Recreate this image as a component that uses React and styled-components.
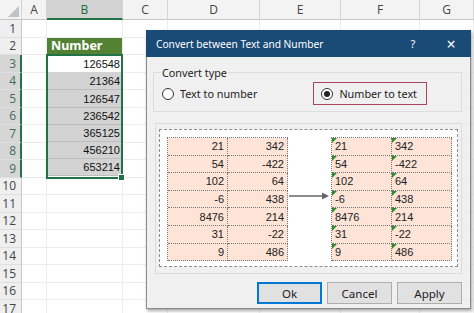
import styled, { createGlobalStyle, css } from "styled-components";

const Global = createGlobalStyle`
  html, body { margin: 0; padding: 0; background: #fff; overflow: hidden; }
  body { width: 474px; height: 313px; }
`;

const Page = styled.div`
  position: relative;
  width: 474px;
  height: 313px;
  overflow: hidden;
  font-family: "Liberation Sans", Arial, sans-serif;
`;

const Sheet = styled.div`
  display: grid;
  grid-template-columns: 22px 25px 76px 45px 92px 81px 79px 54px;
  grid-template-rows: 20px repeat(17, 17.5px);
`;

const Corner = styled.div`
  position: relative;
  background: #f3f3f3;
  border-right: 1px solid #d4d4d4;
  border-bottom: 1px solid #c6c6c6;
  &::after {
    content: "";
    position: absolute;
    right: 2px;
    bottom: 2px;
    border-left: 11px solid transparent;
    border-bottom: 11px solid #c1c1c1;
  }
`;

const ColHead = styled.div`
  display: flex;
  align-items: center;
  justify-content: center;
  font-family: "Open Sans", "Noto Sans", sans-serif;
  font-size: 12px;
  color: #444;
  background: #f3f3f3;
  border-right: 1px solid #d4d4d4;
  border-bottom: 1px solid #c6c6c6;
  ${(p) =>
    p.$selected &&
    css`
      background: #d2d2d2;
      color: #1e6b3c;
      border-bottom: 2px solid #217346;
    `}
`;

const RowHead = styled.div`
  display: flex;
  align-items: center;
  justify-content: flex-end;
  padding-right: 5px;
  font-family: "Open Sans", "Noto Sans", sans-serif;
  font-size: 12px;
  color: #444;
  background: #efefef;
  border-right: 1px solid #c6c6c6;
  border-bottom: 1px solid #dedede;
  ${(p) =>
    p.$selected &&
    css`
      background: #d6d6d6;
      color: #4b6a55;
      border-right: 2px solid #217346;
      padding-right: 4px;
    `}
`;

const Cell = styled.div`
  display: flex;
  align-items: center;
  justify-content: flex-end;
  padding-right: 3px;
  font-size: 11px;
  color: #111;
  background: #fff;
  border-right: 1px solid #ececec;
  border-bottom: 1px solid #ececec;
  ${(p) =>
    p.$kind === "title" &&
    css`
      justify-content: flex-start;
      padding-left: 4px;
      background: #548235;
      color: #fff;
      font-weight: bold;
      font-size: 12.5px;
      font-family: "Noto Sans", "Liberation Sans", sans-serif;
    `}
`;

const Range = styled.div`
  grid-column: 3;
  grid-row: 4 / 11;
  position: relative;
  display: grid;
  grid-auto-rows: 1fr;
  margin: -1px 0 -1px -1px;
  border: 2px solid #217346;
`;

const RangeCell = styled.div`
  display: flex;
  align-items: center;
  justify-content: flex-end;
  padding-right: 1px;
  font-size: 11px;
  color: #111;
  background: ${(p) => (p.$active ? "#fff" : "#d3d3d3")};
  border-bottom: 1px solid ${(p) => (p.$active ? "#d3d3d3" : "#bdbdbd")};
  &:last-child {
    border-bottom: none;
  }
`;

const FillHandle = styled.span`
  position: absolute;
  right: -4px;
  bottom: -4px;
  width: 5px;
  height: 5px;
  background: #217346;
  border: 1px solid #fff;
`;

/* dialog */

const Dialog = styled.div`
  position: absolute;
  left: 146px;
  top: 30px;
  width: 325px;
  height: 279px;
  box-sizing: border-box;
  display: flex;
  flex-direction: column;
  background: #f0f0f0;
  border: 1px solid #8a8a8a;
  border-top: none;
  box-shadow: 1px 2px 3px rgba(0, 0, 0, 0.35);
  font-family: "Noto Sans", "Open Sans", sans-serif;
  font-size: 10.8px;
  color: #222;
`;

const TitleBar = styled.div`
  height: 27px;
  display: flex;
  align-items: center;
  margin: 0 -1px;
  padding: 0 12px 0 10px;
  background: #1a4a76;
  color: #fff;
  font-size: 10.2px;
`;

const Title = styled.span`
  flex: 1;
`;

const TitleButton = styled.span`
  width: 16px;
  text-align: center;
  font-size: ${(p) => (p.$big ? "16px" : "11px")};
  margin-left: ${(p) => (p.$big ? "22px" : "0")};
`;

const Body = styled.div`
  flex: 1;
  display: flex;
  flex-direction: column;
  padding: 8px 8px 0 6px;
`;

const Group = styled.fieldset`
  margin: 0;
  padding: 1px 34px 5px 7px;
  border: 1px solid #dcdcdc;
  display: flex;
  align-items: center;
`;

const Legend = styled.legend`
  padding: 0 1px;
  margin-left: 0;
`;

const Option = styled.label`
  display: flex;
  align-items: center;
  gap: 6px;
  padding: ${(p) => (p.$marked ? "3px 9px 3px 7px" : "4px 0")};
  margin-left: ${(p) => (p.$marked ? "auto" : "0")};
  border: ${(p) => (p.$marked ? "1px solid #a6485a" : "1px solid transparent")};
`;

const Radio = styled.span`
  width: 10px;
  height: 10px;
  border-radius: 50%;
  border: 1px solid #333;
  background: #fff;
  display: flex;
  align-items: center;
  justify-content: center;
  &::after {
    content: "";
    width: 6px;
    height: 6px;
    border-radius: 50%;
    background: ${(p) => (p.$on ? "#222" : "transparent")};
  }
`;

const PreviewGroup = styled.div`
  margin: 11px 0 0 2px;
  padding: 5px 3px 6px 3px;
  border: 1px solid #dcdcdc;
`;

const Preview = styled.div`
  display: flex;
  align-items: flex-start;
  padding: 7px 7px 5px 7px;
  background: #fff;
  border: 1px dashed #8c8c8c;
`;

const Table = styled.div`
  display: grid;
  grid-template-columns: 60px 60px;
  grid-auto-rows: 17.6px;
  border-top: 1px dotted #777;
  border-left: 1px dotted #777;
  font-family: "Liberation Sans", Arial, sans-serif;
  font-size: 11px;
  color: #222;
`;

const PCell = styled.div`
  position: relative;
  display: flex;
  align-items: center;
  justify-content: ${(p) => (p.$text ? "flex-start" : "flex-end")};
  padding: 0 3px;
  background: #fde4d6;
  border-right: 1px dotted #777;
  border-bottom: 1px dotted #777;
  ${(p) =>
    p.$text &&
    css`
      &::before {
        content: "";
        position: absolute;
        left: 0;
        top: 0;
        border-top: 5px solid #2e8b2e;
        border-right: 5px solid transparent;
      }
    `}
`;

const Arrow = styled.svg`
  width: 43px;
  height: 12px;
  margin-top: 53px;
  flex-shrink: 0;
`;

const Buttons = styled.div`
  display: flex;
  justify-content: flex-end;
  gap: 5px;
  margin: 8px 0 0 0;
`;

const Button = styled.button`
  width: 65px;
  height: 22px;
  padding: 0;
  font-family: "Noto Sans", "Open Sans", sans-serif;
  font-size: 11.5px;
  color: #222;
  background: #e1e1e1;
  border: 1px solid ${(p) => (p.$primary ? "#0078d7" : "#adadad")};
  box-shadow: ${(p) => (p.$primary ? "inset 0 0 0 1px #0078d7" : "none")};
`;

const columns = ["A", "B", "C", "D", "E", "F", "G"];
const numbers = [126548, 21364, 126547, 236542, 365125, 456210, 653214];
const pairs = [
  ["21", "342"],
  ["54", "-422"],
  ["102", "64"],
  ["-6", "438"],
  ["8476", "214"],
  ["31", "-22"],
  ["9", "486"],
];

function rowCells(row) {
  const out = [];
  columns.forEach((_, col) => {
    if (col === 1 && row >= 3 && row <= 9) return; // covered by the selected range
    if (col === 1 && row === 2) {
      out.push(
        <Cell key={row + "-" + col} $kind="title">
          Number
        </Cell>
      );
      return;
    }
    out.push(<Cell key={row + "-" + col} />);
  });
  return out;
}

function PreviewTable({ text }) {
  return (
    <Table>
      {pairs.flat().map((v, i) => (
        <PCell key={i} $text={text}>
          {v}
        </PCell>
      ))}
    </Table>
  );
}

export default function App() {
  const rows = Array.from({ length: 17 }, (_, i) => i + 1);
  return (
    <Page>
      <Global />
      <Sheet>
        <Corner />
        {columns.map((c) => (
          <ColHead key={c} $selected={c === "B"}>
            {c}
          </ColHead>
        ))}
        <Range>
          {numbers.map((n, i) => (
            <RangeCell key={n} $active={i === 0}>
              {n}
            </RangeCell>
          ))}
          <FillHandle />
        </Range>
        {rows.map((r) => [
          <RowHead key={"h" + r} $selected={r >= 3 && r <= 9}>
            {r}
          </RowHead>,
          ...rowCells(r),
        ])}
      </Sheet>

      <Dialog>
        <TitleBar>
          <Title>Convert between Text and Number</Title>
          <TitleButton>?</TitleButton>
          <TitleButton $big>×</TitleButton>
        </TitleBar>
        <Body>
          <Group>
            <Legend>Convert type</Legend>
            <Option>
              <Radio />
              Text to number
            </Option>
            <Option $marked>
              <Radio $on />
              Number to text
            </Option>
          </Group>
          <PreviewGroup>
            <Preview>
              <PreviewTable />
              <Arrow viewBox="0 0 43 12">
                <line x1="1" y1="6" x2="36" y2="6" stroke="#666" strokeWidth="1.3" />
                <path d="M34 2.5 L41 6 L34 9.5 Z" fill="#666" />
              </Arrow>
              <PreviewTable text />
            </Preview>
          </PreviewGroup>
          <Buttons>
            <Button $primary>Ok</Button>
            <Button>Cancel</Button>
            <Button>Apply</Button>
          </Buttons>
        </Body>
      </Dialog>
    </Page>
  );
}
